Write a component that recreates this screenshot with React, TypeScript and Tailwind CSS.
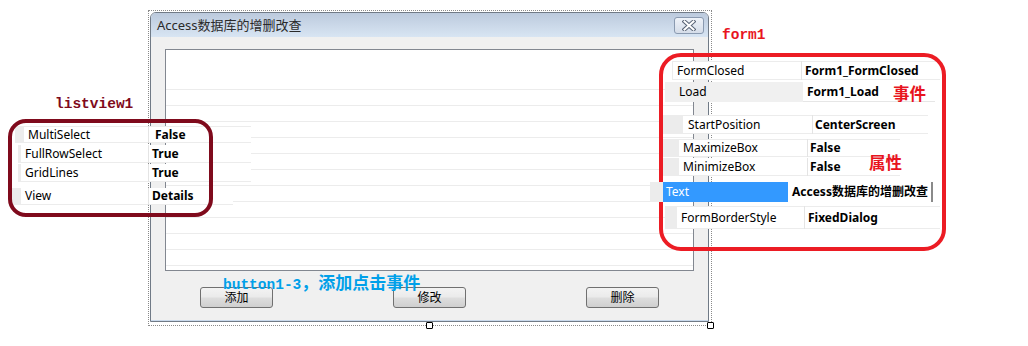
import React from "react";

const sans = "font-['Noto_Sans','Noto_Sans_CJK_SC',sans-serif]";
const mono = "font-['Liberation_Mono','Noto_Sans_CJK_SC',monospace]";

function Btn({ label }: { label: string }) {
  return (
    <div
      className={`w-[73px] h-[21px] rounded-[3px] border border-[#707070] bg-[linear-gradient(#f3f3f3,#ebebeb_45%,#dddddd_55%,#cfcfcf)] flex items-center justify-center text-[12px] leading-none text-black ${sans}`}
    >
      {label}
    </div>
  );
}

function CloseBtn() {
  return (
    <div className="mt-[4px] w-[30px] h-[17px] rounded-[3px] border border-[#8a9ab0] bg-[linear-gradient(#eef2f8,#d5dde9)] flex items-center justify-center">
      <svg width="14" height="11" viewBox="0 0 14 11">
        <path d="M2.5 1.5 L11.5 9.5 M11.5 1.5 L2.5 9.5" stroke="#5b6678" strokeWidth="4" strokeLinecap="square" />
        <path d="M2.5 1.5 L11.5 9.5 M11.5 1.5 L2.5 9.5" stroke="#ffffff" strokeWidth="2" strokeLinecap="square" />
      </svg>
    </div>
  );
}

export default function App() {
  const gridRows = Array.from({ length: 12 });
  return (
    <div className={`relative w-[1028px] h-[346px] overflow-hidden bg-white ${sans}`}>
      {/* Form designer selection + window */}
      <div className="ml-[148px] mt-[10px] w-[564px] h-[316px] border border-dotted border-[#8a8a8a] pl-px pt-px">
        <div className="w-[559px] h-[310px] rounded-t-[6px] border border-[#707a86] flex flex-col overflow-hidden">
          <div className="h-[24px] shrink-0 bg-[linear-gradient(#bccadd,#d8e5f3)] flex items-start justify-between pl-[6px] pr-[4px]">
            <span className="mt-[4px] text-[13px] leading-[16px] text-[#2a2a2a]">Access数据库的增删改查</span>
            <CloseBtn />
          </div>
          <div className="flex-1 bg-[#f0f0f0] border-b border-[#c9d9ec] pt-[12px] px-[14px]">
            <div className="w-[529px] h-[222px] bg-white border border-[#828790] overflow-hidden">
              <div className="h-[39px]" />
              {gridRows.map((_, i) => (
                <div key={i} className="h-[16px] border-t border-[#ececec]" />
              ))}
            </div>
            <div className="mt-[16px] ml-[35px] flex gap-[120px]">
              <Btn label="添加" />
              <Btn label="修改" />
              <Btn label="删除" />
            </div>
          </div>
        </div>
      </div>

      {/* selection handles */}
      <div className="absolute left-[426px] top-[322px] w-[7px] h-[7px] border border-black bg-white rounded-[1px]" />
      <div className="absolute left-[707px] top-[322px] w-[7px] h-[7px] border border-black bg-white rounded-[1px]" />

      {/* listview1 annotation */}
      <div className={`absolute left-[55px] top-[95px] text-[14.5px] leading-[18px] font-bold text-[#7f0a1c] ${mono}`}>
        listview1
      </div>
      <div className="absolute left-[8px] top-[119px] w-[205px] h-[98px] p-[4px] text-[12px] text-black">
        <div className="flex w-max h-[17px] ml-[3px] mt-[3px]">
          <div className="w-[9px] bg-[#ececec]" />
          <div className="w-[124px] bg-white border-y border-[#ececec] pl-[4px] flex items-center">MultiSelect</div>
          <div className="w-px bg-[#e4e4e4]" />
          <div className="w-[102px] bg-white border-y border-[#ececec] pl-[6px] flex items-center font-bold">False</div>
        </div>
        <div className="flex w-max h-[18px] ml-[6px] mt-[2px]">
          <div className="w-[3px] bg-[#ececec]" />
          <div className="w-[127px] bg-white border-b border-[#ececec] pl-[4px] flex items-center">FullRowSelect</div>
          <div className="w-px bg-[#e4e4e4]" />
          <div className="w-[102px] bg-white border-b border-[#ececec] pl-[3px] flex items-center font-bold">True</div>
        </div>
        <div className="flex w-max h-[18px] ml-[6px] mt-px">
          <div className="w-[3px] bg-[#ececec]" />
          <div className="w-[127px] bg-white border-b border-[#ececec] pl-[4px] flex items-center">GridLines</div>
          <div className="w-px bg-[#e4e4e4]" />
          <div className="w-[102px] bg-white border-b border-[#ececec] pl-[3px] flex items-center font-bold">True</div>
        </div>
        <div className="flex w-max h-[17px] mt-[6px]">
          <div className="w-[9px] bg-[#ececec]" />
          <div className="w-[127px] bg-white border-b border-[#ececec] pl-[4px] flex items-center">View</div>
          <div className="w-px bg-[#e4e4e4]" />
          <div className="w-[84px] bg-white border-b border-[#ececec] pl-[3px] flex items-center font-bold">Details</div>
        </div>
        <div className="absolute inset-0 rounded-[18px] border-4 border-[#7f0a1c]" />
      </div>

      {/* form1 annotation */}
      <div className={`absolute left-[722px] top-[26px] text-[14.5px] leading-[18px] font-bold text-[#e8141e] ${mono}`}>
        form1
      </div>
      <div className="absolute left-[659px] top-[53px] w-[287px] h-[198px] p-[4px] text-[12px] text-black">
        <div className="absolute inset-0 rounded-[22px] border-4 border-[#ec1c24]" />
        <div className="flex w-max h-[19px] ml-[9px] mt-[4px]">
          <div className="w-[129px] bg-white border border-r-0 border-[#ececec] pl-[4px] flex items-center">FormClosed</div>
          <div className="w-px bg-[#e4e4e4]" />
          <div className="w-[138px] bg-white border-y border-[#ececec] pl-[3px] flex items-center font-bold">Form1_FormClosed</div>
        </div>
        <div className="flex w-max h-[20px] ml-[2px] mt-[2px]">
          <div className="w-[138px] bg-[#f0f0f0] pl-[14px] flex items-center">Load</div>
          <div className="w-[132px] bg-white border-b border-[#e6e6e6] pl-[4px] flex items-center font-bold">Form1_Load</div>
        </div>
        <div className="flex w-max h-[19px] mt-[13px]">
          <div className="w-[20px] bg-[#ececec]" />
          <div className="w-[129px] bg-white border-y border-[#ececec] pl-[5px] flex items-center">StartPosition</div>
          <div className="w-px bg-[#e4e4e4]" />
          <div className="w-[115px] bg-white border-y border-[#ececec] pl-[2px] flex items-center font-bold">CenterScreen</div>
        </div>
        <div className="flex w-max h-[18px] mt-[5px]">
          <div className="w-[16px] bg-[#ececec]" />
          <div className="w-[128px] bg-white border-y border-[#ececec] pl-[4px] flex items-center">MaximizeBox</div>
          <div className="w-px bg-[#e4e4e4]" />
          <div className="w-[92px] bg-white border-y border-[#ececec] pl-[2px] flex items-center font-bold">False</div>
        </div>
        <div className="flex w-max h-[18px] mt-px">
          <div className="w-[16px] bg-[#ececec]" />
          <div className="w-[128px] bg-white border-b border-[#ececec] pl-[4px] flex items-center">MinimizeBox</div>
          <div className="w-px bg-[#e4e4e4]" />
          <div className="w-[92px] bg-white border-b border-[#ececec] pl-[2px] flex items-center font-bold">False</div>
        </div>
        <div className="relative flex w-max h-[20px] mt-[6px] -ml-[13px]">
          <div className="w-[13px] bg-[#ececec]" />
          <div className="w-[125px] bg-[#3399ff] text-white pl-[3px] flex items-center">Text</div>
          <div className="w-[143px] bg-white pl-[4px] flex items-center font-bold whitespace-nowrap">Access数据库的增删改查</div>
          <div className="w-[2px] bg-[#8a8a8a]" />
        </div>
        <div className="flex w-max h-[23px] mt-[4px] ml-[2px]">
          <div className="w-[12px] bg-[#ececec]" />
          <div className="w-[127px] bg-white border-y border-[#ececec] pl-[4px] flex items-center">FormBorderStyle</div>
          <div className="w-px bg-[#e4e4e4]" />
          <div className="w-[135px] bg-white border-y border-[#ececec] pl-[3px] flex items-center font-bold">FixedDialog</div>
        </div>
      </div>

      <div className="absolute left-[893px] top-[83px] text-[16.5px] leading-[20px] font-bold text-[#e8141e] font-['Noto_Sans_CJK_SC',sans-serif]">
        事件
      </div>
      <div className="absolute left-[869px] top-[152px] text-[16.5px] leading-[20px] font-bold text-[#e8141e] font-['Noto_Sans_CJK_SC',sans-serif]">
        属性
      </div>

      {/* button annotation */}
      <div className={`absolute left-[223px] top-[276px] leading-[12px] font-bold text-[#00a0e9] whitespace-nowrap ${mono}`}>
        <span className="text-[14.5px]">button1-3</span>
        <span className="text-[17px] font-['Noto_Sans_CJK_SC',sans-serif]">，添加点击事件</span>
      </div>
    </div>
  );
}
